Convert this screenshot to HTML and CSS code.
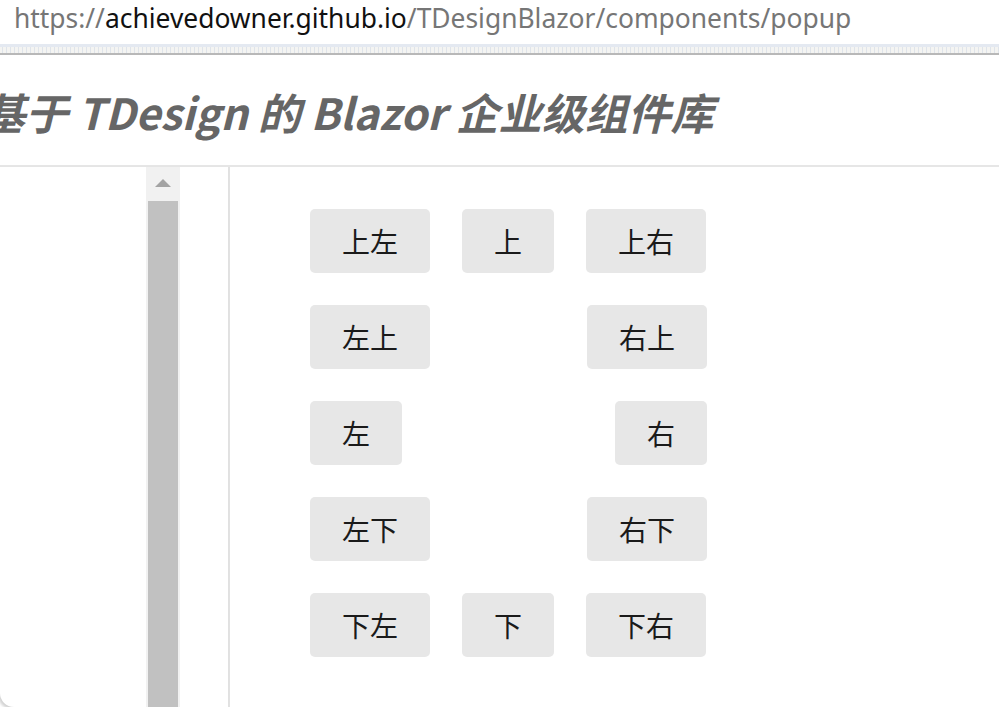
FILE: index.html
```html
<!DOCTYPE html>
<html lang="zh-CN">
<head>
<meta charset="utf-8">
<title>Popup</title>
<link rel="stylesheet" href="styles.css">
</head>
<body>
<div class="urlbar"><span class="dim">https://</span><span class="host">achievedowner.github.io</span><span class="dim">/TDesignBlazor/components/popup</span></div>
<div class="band"></div>
<header class="header"><h1 class="title">基于 TDesign 的 Blazor 企业级组件库</h1></header>
<div class="main">
  <aside class="sidebar">
    <div class="scrollbar">
      <div class="scroll-btn"><span class="arrow"></span></div>
      <div class="thumb"></div>
    </div>
  </aside>
  <div class="divider"></div>
  <section class="content">
    <div class="grid">
      <div class="row row-full">
        <button class="btn">上左</button>
        <button class="btn">上</button>
        <button class="btn">上右</button>
      </div>
      <div class="row row-side">
        <button class="btn">左上</button>
        <button class="btn">右上</button>
      </div>
      <div class="row row-side">
        <button class="btn">左</button>
        <button class="btn">右</button>
      </div>
      <div class="row row-side">
        <button class="btn">左下</button>
        <button class="btn">右下</button>
      </div>
      <div class="row row-full">
        <button class="btn">下左</button>
        <button class="btn">下</button>
        <button class="btn">下右</button>
      </div>
    </div>
  </section>
</div>
</body>
</html>
```
FILE: styles.css
```css
html, body {
  margin: 0;
  padding: 0;
  background: #ffffff;
  overflow: hidden;
  height: 100%;
}
body {
  font-family: "Noto Sans", "Noto Sans CJK SC", sans-serif;
  display: flex;
  flex-direction: column;
}
.urlbar {
  height: 44px;
  box-sizing: border-box;
  padding: 0 0 0 14px;
  font-family: "Noto Sans", sans-serif;
  font-size: 26.4px;
  line-height: 36px;
  color: #767676;
  white-space: nowrap;
  flex: none;
}
.host {
  color: #111111;
}
.band {
  flex: none;
  background:
    repeating-linear-gradient(90deg, #f4f4f2 0 2px, #dfe4ea 2px 3px, #f4f4f2 3px 4px);
  border-top: 3px solid #e4e9f1;
  border-bottom: 2px solid #b8b8b8;
  box-sizing: border-box;
  height: 11px;
}
.header {
  height: 112px;
  flex: none;
  box-sizing: border-box;
  border-bottom: 2px solid #e6e6e6;
  overflow: hidden;
  display: flex;
  align-items: center;
}
.title {
  margin: 2px 0 0 -18px;
  font-family: "Noto Sans CJK SC", "Noto Sans", sans-serif;
  font-size: 43px;
  font-weight: 700;
  font-style: italic;
  color: #666666;
  white-space: nowrap;
  line-height: 1;
}
.main {
  flex: 1;
  display: flex;
  min-height: 0;
}
.sidebar {
  width: 228px;
  flex: none;
  position: relative;
  border-bottom-left-radius: 14px;
  box-shadow: -2px 2px 3px rgba(0,0,0,0.18);
}
.scrollbar {
  position: absolute;
  left: 146px;
  top: 0;
  bottom: 0;
  width: 34px;
  background: #f1f1f1;
  display: flex;
  flex-direction: column;
}
.scroll-btn {
  height: 34px;
  display: flex;
  align-items: center;
  justify-content: center;
  flex: none;
}
.arrow {
  width: 0;
  height: 0;
  border-left: 8px solid transparent;
  border-right: 8px solid transparent;
  border-bottom: 8px solid #a3a3a3;
  margin-top: -2px;
}
.thumb {
  flex: 1;
  margin: 0 2px;
  background: #c1c1c1;
}
.divider {
  width: 2px;
  flex: none;
  background: #e2e2e2;
}
.content {
  flex: 1;
  padding: 42px 0 0 80px;
}
.grid {
  width: 397px;
  display: flex;
  flex-direction: column;
  gap: 32px;
}
.row {
  display: flex;
}
.row-full {
  gap: 32px;
}
.row-side {
  justify-content: space-between;
}
.btn {
  height: 64px;
  padding: 0 32px;
  border: none;
  border-radius: 5px;
  background: #e7e7e7;
  color: #1a1a1a;
  font-family: "Noto Sans CJK SC", sans-serif;
  font-size: 28px;
  line-height: 1;
  cursor: pointer;
}
```
